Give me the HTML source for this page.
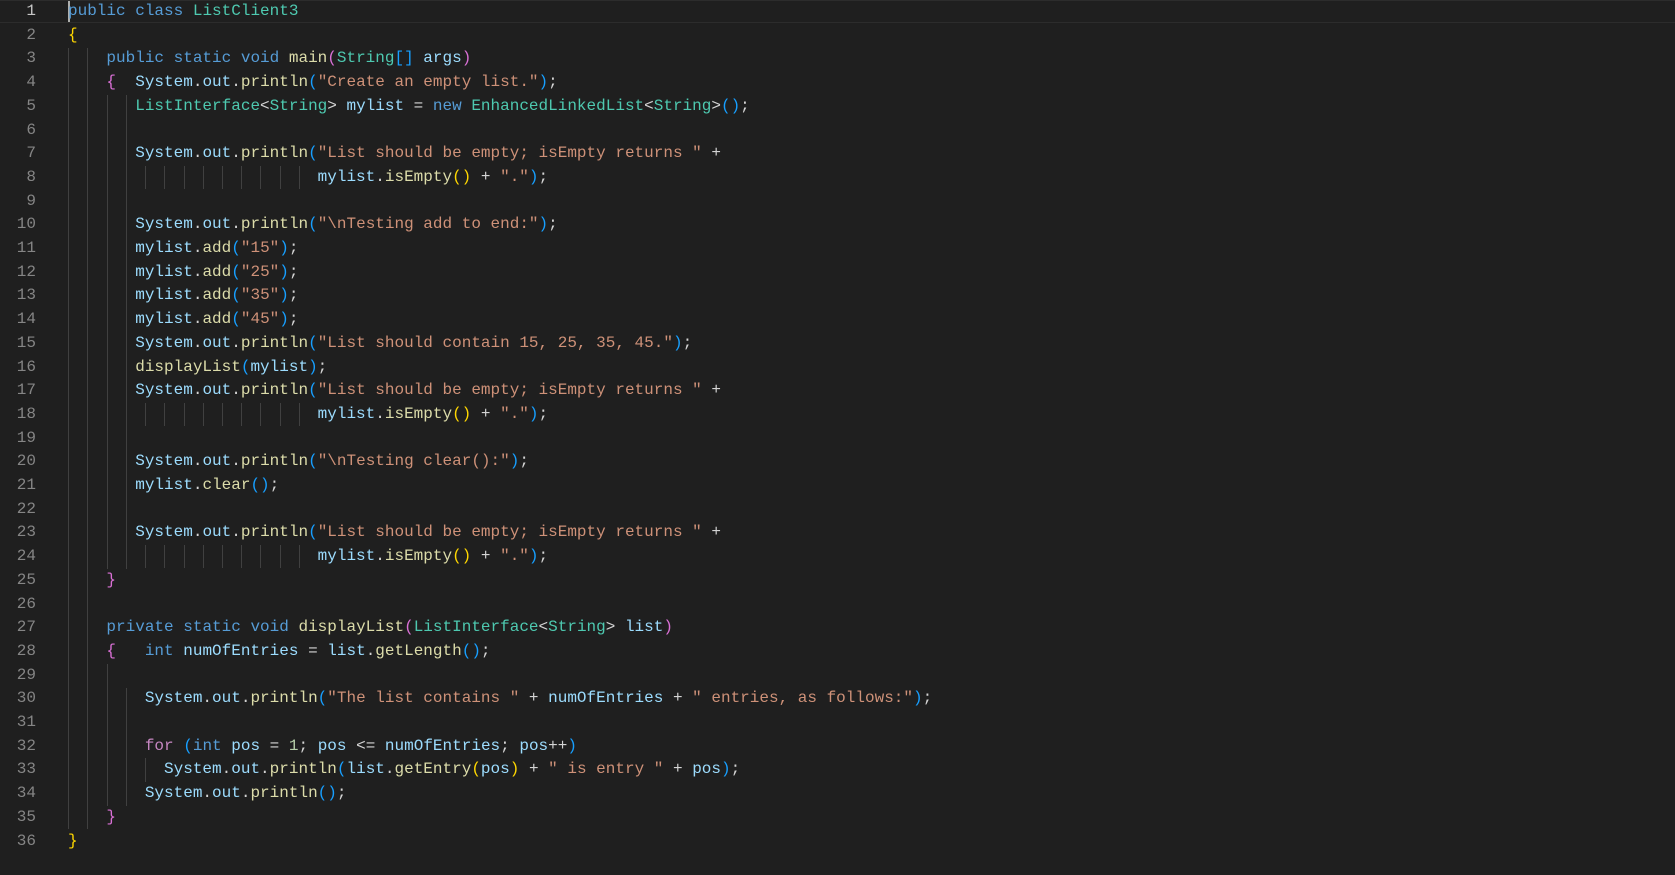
<!DOCTYPE html>
<html><head><meta charset="utf-8"><style>
html,body{margin:0;padding:0;background:#1f1f1f;width:1675px;height:875px;overflow:hidden}
.ed{position:relative;width:1675px;height:875px;font-family:"Liberation Mono",monospace;font-size:16px}
.ln{position:absolute;left:0;width:36px;text-align:right;color:#858585;height:23.7px;line-height:23.7px}
.l{position:absolute;left:68px;white-space:pre;height:23.7px;line-height:23.7px;color:#d4d4d4}
.g{position:absolute;width:1px;background:#404040}
.cur{position:absolute;left:0;top:0;width:1675px;height:21px;border-top:1px solid #2c2c2c;border-bottom:1px solid #2c2c2c;box-sizing:content-box}
.k{color:#569cd6}.t{color:#4ec9b0}.v{color:#9cdcfe}.f{color:#dcdcaa}.s{color:#ce9178}.n{color:#b5cea8}.c{color:#c586c0}
.b1{color:#ffd700}.b2{color:#da70d6}.b3{color:#179fff}
</style></head><body><div class="ed">
<div class="cur"></div>
<div style="position:absolute;left:68px;top:1px;width:2px;height:21px;background:#aeafad"></div>

<div class="g" style="left:68px;top:48px;height:781px"></div>
<div class="g" style="left:87px;top:48px;height:781px"></div>
<div class="g" style="left:107px;top:95px;height:474px"></div>
<div class="g" style="left:126px;top:95px;height:474px"></div>
<div class="g" style="left:107px;top:664px;height:142px"></div>
<div class="g" style="left:126px;top:688px;height:118px"></div>
<div class="g" style="left:145px;top:758px;height:24px"></div>

<div class="ln" style="top:0;color:#c6c6c6">1</div>
<div class="ln" style="top:23.7px">2</div>
<div class="ln" style="top:47.4px">3</div>
<div class="ln" style="top:71.1px">4</div>
<div class="ln" style="top:94.8px">5</div>
<div class="ln" style="top:118.5px">6</div>
<div class="ln" style="top:142.2px">7</div>
<div class="ln" style="top:165.9px">8</div>
<div class="ln" style="top:189.6px">9</div>
<div class="ln" style="top:213.3px">10</div>
<div class="ln" style="top:237px">11</div>
<div class="ln" style="top:260.7px">12</div>
<div class="ln" style="top:284.4px">13</div>
<div class="ln" style="top:308.1px">14</div>
<div class="ln" style="top:331.8px">15</div>
<div class="ln" style="top:355.5px">16</div>
<div class="ln" style="top:379.2px">17</div>
<div class="ln" style="top:402.9px">18</div>
<div class="ln" style="top:426.6px">19</div>
<div class="ln" style="top:450.3px">20</div>
<div class="ln" style="top:474px">21</div>
<div class="ln" style="top:497.7px">22</div>
<div class="ln" style="top:521.4px">23</div>
<div class="ln" style="top:545.1px">24</div>
<div class="ln" style="top:568.8px">25</div>
<div class="ln" style="top:592.5px">26</div>
<div class="ln" style="top:616.2px">27</div>
<div class="ln" style="top:639.9px">28</div>
<div class="ln" style="top:663.6px">29</div>
<div class="ln" style="top:687.3px">30</div>
<div class="ln" style="top:711px">31</div>
<div class="ln" style="top:734.7px">32</div>
<div class="ln" style="top:758.4px">33</div>
<div class="ln" style="top:782.1px">34</div>
<div class="ln" style="top:805.8px">35</div>
<div class="ln" style="top:829.5px">36</div>

<div class="l" style="top:0"><span class="k">public</span> <span class="k">class</span> <span class="t">ListClient3</span></div>
<div class="l" style="top:23.7px"><span class="b1">{</span></div>
<div class="l" style="top:47.4px">    <span class="k">public</span> <span class="k">static</span> <span class="k">void</span> <span class="f">main</span><span class="b2">(</span><span class="t">String</span><span class="b3">[]</span> <span class="v">args</span><span class="b2">)</span></div>
<div class="l" style="top:71.1px">    <span class="b2">{</span>  <span class="v">System</span>.<span class="v">out</span>.<span class="f">println</span><span class="b3">(</span><span class="s">"Create an empty list."</span><span class="b3">)</span>;</div>
<div class="l" style="top:94.8px">       <span class="t">ListInterface</span>&lt;<span class="t">String</span>&gt; <span class="v">mylist</span> = <span class="k">new</span> <span class="t">EnhancedLinkedList</span>&lt;<span class="t">String</span>&gt;<span class="b3">()</span>;</div>
<div class="l" style="top:142.2px">       <span class="v">System</span>.<span class="v">out</span>.<span class="f">println</span><span class="b3">(</span><span class="s">"List should be empty; isEmpty returns "</span> +</div>
<div class="l" style="top:165.9px">                          <span class="v">mylist</span>.<span class="f">isEmpty</span><span class="b1">()</span> + <span class="s">"."</span><span class="b3">)</span>;</div>
<div class="l" style="top:213.3px">       <span class="v">System</span>.<span class="v">out</span>.<span class="f">println</span><span class="b3">(</span><span class="s">"\nTesting add to end:"</span><span class="b3">)</span>;</div>
<div class="l" style="top:237px">       <span class="v">mylist</span>.<span class="f">add</span><span class="b3">(</span><span class="s">"15"</span><span class="b3">)</span>;</div>
<div class="l" style="top:260.7px">       <span class="v">mylist</span>.<span class="f">add</span><span class="b3">(</span><span class="s">"25"</span><span class="b3">)</span>;</div>
<div class="l" style="top:284.4px">       <span class="v">mylist</span>.<span class="f">add</span><span class="b3">(</span><span class="s">"35"</span><span class="b3">)</span>;</div>
<div class="l" style="top:308.1px">       <span class="v">mylist</span>.<span class="f">add</span><span class="b3">(</span><span class="s">"45"</span><span class="b3">)</span>;</div>
<div class="l" style="top:331.8px">       <span class="v">System</span>.<span class="v">out</span>.<span class="f">println</span><span class="b3">(</span><span class="s">"List should contain 15, 25, 35, 45."</span><span class="b3">)</span>;</div>
<div class="l" style="top:355.5px">       <span class="f">displayList</span><span class="b3">(</span><span class="v">mylist</span><span class="b3">)</span>;</div>
<div class="l" style="top:379.2px">       <span class="v">System</span>.<span class="v">out</span>.<span class="f">println</span><span class="b3">(</span><span class="s">"List should be empty; isEmpty returns "</span> +</div>
<div class="l" style="top:402.9px">                          <span class="v">mylist</span>.<span class="f">isEmpty</span><span class="b1">()</span> + <span class="s">"."</span><span class="b3">)</span>;</div>
<div class="l" style="top:450.3px">       <span class="v">System</span>.<span class="v">out</span>.<span class="f">println</span><span class="b3">(</span><span class="s">"\nTesting clear():"</span><span class="b3">)</span>;</div>
<div class="l" style="top:474px">       <span class="v">mylist</span>.<span class="f">clear</span><span class="b3">()</span>;</div>
<div class="l" style="top:521.4px">       <span class="v">System</span>.<span class="v">out</span>.<span class="f">println</span><span class="b3">(</span><span class="s">"List should be empty; isEmpty returns "</span> +</div>
<div class="l" style="top:545.1px">                          <span class="v">mylist</span>.<span class="f">isEmpty</span><span class="b1">()</span> + <span class="s">"."</span><span class="b3">)</span>;</div>
<div class="l" style="top:568.8px">    <span class="b2">}</span></div>
<div class="l" style="top:616.2px">    <span class="k">private</span> <span class="k">static</span> <span class="k">void</span> <span class="f">displayList</span><span class="b2">(</span><span class="t">ListInterface</span>&lt;<span class="t">String</span>&gt; <span class="v">list</span><span class="b2">)</span></div>
<div class="l" style="top:639.9px">    <span class="b2">{</span>   <span class="k">int</span> <span class="v">numOfEntries</span> = <span class="v">list</span>.<span class="f">getLength</span><span class="b3">()</span>;</div>
<div class="l" style="top:687.3px">        <span class="v">System</span>.<span class="v">out</span>.<span class="f">println</span><span class="b3">(</span><span class="s">"The list contains "</span> + <span class="v">numOfEntries</span> + <span class="s">" entries, as follows:"</span><span class="b3">)</span>;</div>
<div class="l" style="top:734.7px">        <span class="c">for</span> <span class="b3">(</span><span class="k">int</span> <span class="v">pos</span> = <span class="n">1</span>; <span class="v">pos</span> &lt;= <span class="v">numOfEntries</span>; <span class="v">pos</span>++<span class="b3">)</span></div>
<div class="l" style="top:758.4px">          <span class="v">System</span>.<span class="v">out</span>.<span class="f">println</span><span class="b3">(</span><span class="v">list</span>.<span class="f">getEntry</span><span class="b1">(</span><span class="v">pos</span><span class="b1">)</span> + <span class="s">" is entry "</span> + <span class="v">pos</span><span class="b3">)</span>;</div>
<div class="l" style="top:782.1px">        <span class="v">System</span>.<span class="v">out</span>.<span class="f">println</span><span class="b3">()</span>;</div>
<div class="l" style="top:805.8px">    <span class="b2">}</span></div>
<div class="l" style="top:829.5px"><span class="b1">}</span></div>

<div class="g" style="left:145px;top:166px;height:23px"></div><div class="g" style="left:164px;top:166px;height:23px"></div><div class="g" style="left:184px;top:166px;height:23px"></div><div class="g" style="left:203px;top:166px;height:23px"></div><div class="g" style="left:222px;top:166px;height:23px"></div><div class="g" style="left:241px;top:166px;height:23px"></div><div class="g" style="left:260px;top:166px;height:23px"></div><div class="g" style="left:280px;top:166px;height:23px"></div><div class="g" style="left:299px;top:166px;height:23px"></div>
<div class="g" style="left:145px;top:403px;height:23px"></div><div class="g" style="left:164px;top:403px;height:23px"></div><div class="g" style="left:184px;top:403px;height:23px"></div><div class="g" style="left:203px;top:403px;height:23px"></div><div class="g" style="left:222px;top:403px;height:23px"></div><div class="g" style="left:241px;top:403px;height:23px"></div><div class="g" style="left:260px;top:403px;height:23px"></div><div class="g" style="left:280px;top:403px;height:23px"></div><div class="g" style="left:299px;top:403px;height:23px"></div>
<div class="g" style="left:145px;top:545px;height:23px"></div><div class="g" style="left:164px;top:545px;height:23px"></div><div class="g" style="left:184px;top:545px;height:23px"></div><div class="g" style="left:203px;top:545px;height:23px"></div><div class="g" style="left:222px;top:545px;height:23px"></div><div class="g" style="left:241px;top:545px;height:23px"></div><div class="g" style="left:260px;top:545px;height:23px"></div><div class="g" style="left:280px;top:545px;height:23px"></div><div class="g" style="left:299px;top:545px;height:23px"></div>
</div></body></html>
